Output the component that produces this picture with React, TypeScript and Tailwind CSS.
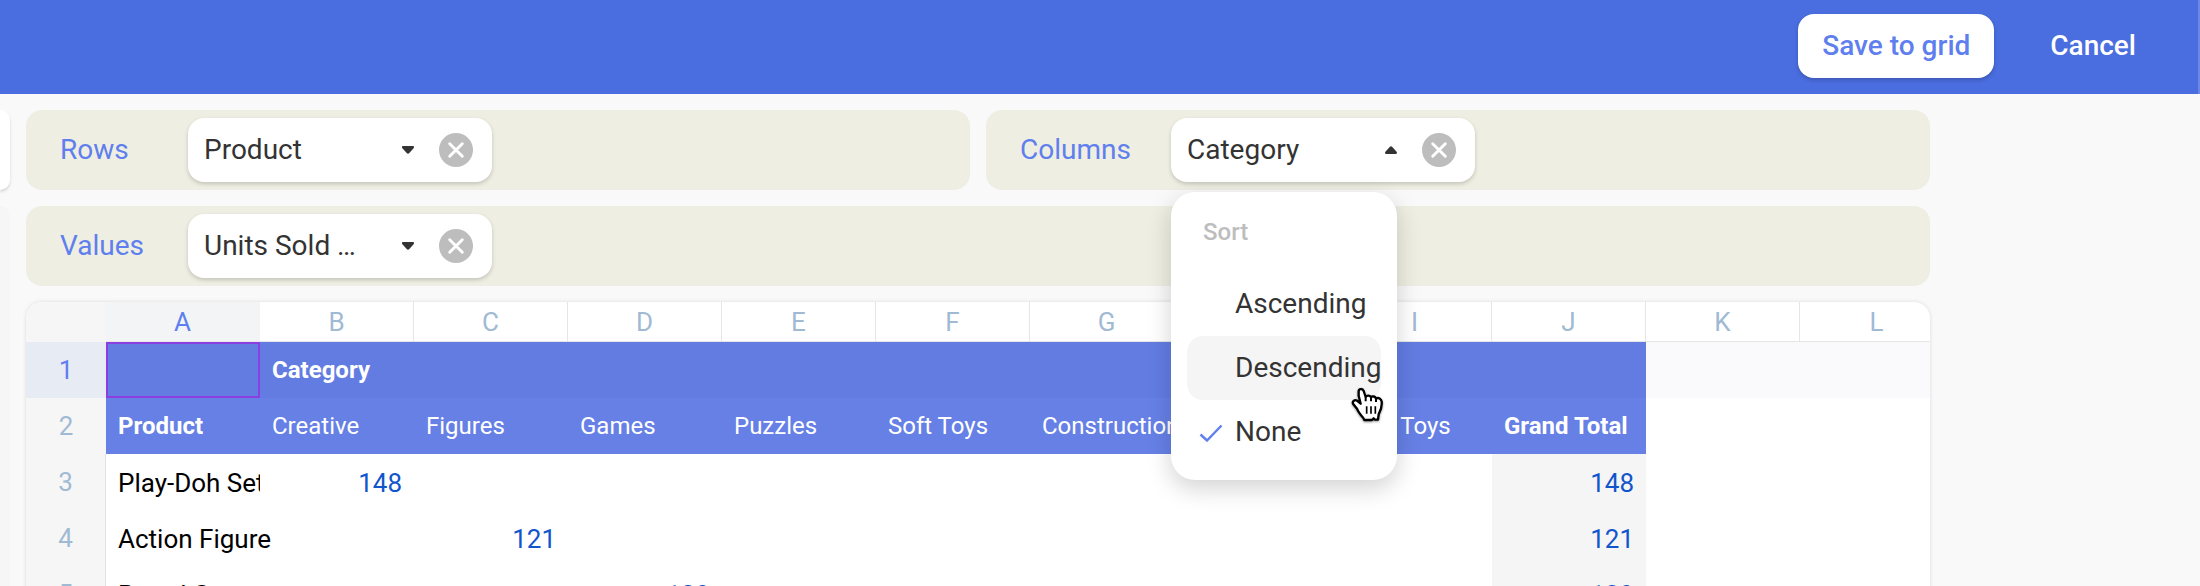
import { useState } from "react";
import { clsx } from "clsx";

type SortOrder = "Ascending" | "Descending" | "None";

type GridRow = {
  product: string;
  column: number;
  value: number;
  clipped?: boolean;
};

const letters = ["A", "B", "C", "D", "E", "F", "G", "H", "I", "J", "K", "L"];

const categories = ["Creative", "Figures", "Games", "Puzzles", "Soft Toys", "Construction", "Outdoor", "Tiny Toys"];

const rows: GridRow[] = [
  { product: "Play-Doh Set", column: 1, value: 148, clipped: true },
  { product: "Action Figure", column: 2, value: 121 },
  { product: "Board Game", column: 3, value: 139 },
];

function Caret({ up }: { up?: boolean }) {
  return (
    <svg width="12" height="8" viewBox="0 0 12 8" className={clsx("shrink-0", up && "rotate-180")}>
      <path d="M1 0h10c1 0 1.300 1.500.6 2.200L7.300 7c-.8.900-1.800.9-2.600 0L.4 2.200C-.3 1.500 0 0 1 0z" fill="#333" />
    </svg>
  );
}

function RemoveIcon() {
  return (
    <svg width="34" height="34" viewBox="0 0 34 34" className="shrink-0">
      <circle cx="17" cy="17" r="17" fill="#bdbdbd" />
      <path d="M10.700 10.700l12.600 12.600M23.300 10.700L10.700 23.300" stroke="#fff" strokeWidth="2.900" strokeLinecap="round" />
    </svg>
  );
}

function Chip({ label, open, onToggle }: { label: string; open?: boolean; onToggle?: () => void }) {
  return (
    <div className="flex h-16 w-[304px] items-center rounded-2xl bg-white pl-4 pr-[19px] shadow-[0_2px_4px_rgba(0,0,0,0.18)]">
      <span className="flex-1 text-[28px] text-[#333]">{label}</span>
      <button className="flex items-center" onClick={onToggle}>
        <Caret up={open} />
      </button>
      <button className="ml-[25px]">
        <RemoveIcon />
      </button>
    </div>
  );
}

function HandCursor() {
  return (
    <svg
      width="32"
      height="36"
      viewBox="33 51 96 108"
      className="pointer-events-none absolute left-[180px] top-[195px] z-20 drop-shadow-[0_1px_1px_rgba(0,0,0,0.4)]"
    >
      <path
        d="M56 64C56 55 68 55 71 63L77 81C80 75 91 76 93 82 97 77 106 79 108 86 115 81 124 86 125 95 127 112 121 124 116 133L114 149H104L101 145 96 150H73L70 144C62 135 55 127 51 116L39 101C36 93 45 88 51 92L62 101 56 77Z"
        fill="#fff"
        stroke="#000"
        strokeWidth="7"
        strokeLinejoin="round"
      />
      <path d="M77 81v13M93 82v12M108 86v10" stroke="#000" strokeWidth="6" />
      <path d="M80 109v22M93 109v22M106 109v22" stroke="#000" strokeWidth="5" />
    </svg>
  );
}

export default function App() {
  const [open, setOpen] = useState(true);
  const [sort, setSort] = useState<SortOrder>("None");

  return (
    <div className="h-[586px] w-[2200px] overflow-hidden bg-[#f9f9f9] font-['Roboto',sans-serif]">
      <header className="flex h-[94px] items-center justify-end border-r-2 border-[#6b87e8] bg-[#4a6de0] pb-0.5 pr-[62px] text-[28px] font-medium">
        <button className="h-16 w-[196px] rounded-2xl bg-white text-[#5f7fee] shadow-[0_2px_4px_rgba(0,0,0,0.2)]">
          Save to grid
        </button>
        <button className="ml-14 text-white">Cancel</button>
      </header>

      <div className="flex">
        <aside className="flex w-[10px] shrink-0 flex-col gap-4 pt-4">
          <div className="h-20 rounded-r-2xl bg-white shadow-[0_2px_3px_rgba(0,0,0,0.15)]" />
          <div className="h-[380px] rounded-tr-2xl bg-[#f6f6f6]" />
        </aside>

        <main className="ml-4 flex w-[1904px] flex-col gap-4 pt-4">
          <div className="flex gap-4">
            <section className="flex h-20 w-[944px] items-center rounded-2xl bg-[#eeeee2] pl-[34px]">
              <span className="w-32 text-[28px] text-[#5f7fee]">Rows</span>
              <Chip label="Product" />
            </section>
            <section className="relative flex h-20 w-[944px] items-center rounded-2xl bg-[#eeeee2] pl-[34px]">
              <span className="w-[151px] text-[28px] text-[#5f7fee]">Columns</span>
              <Chip label="Category" open={open} onToggle={() => setOpen(!open)} />

              {open && (
                <div className="absolute left-[185px] top-[82px] z-10 h-[288px] w-[226px] rounded-3xl bg-white px-4 pt-4 shadow-[0_8px_24px_rgba(0,0,0,0.18)]">
                  <div className="flex h-12 items-center pl-4 text-2xl font-medium text-[#bdbdbd]">Sort</div>
                  <ul className="mt-4">
                    {(["Ascending", "Descending", "None"] as SortOrder[]).map((order) => (
                      <li
                        key={order}
                        onClick={() => setSort(order)}
                        className={clsx(
                          "flex h-16 items-center rounded-2xl text-[28px] text-[#333]",
                          order === "Descending" && "bg-[#f5f5f5]"
                        )}
                      >
                        <span className="flex w-12 shrink-0 justify-center pt-0.5">
                          {sort === order && (
                            <svg width="24" height="18" viewBox="0 0 24 18" fill="none">
                              <path d="M1.500 10.500L8 16.500 22.500 1.500" stroke="#5f7fee" strokeWidth="2.400" />
                            </svg>
                          )}
                        </span>
                        {order}
                      </li>
                    ))}
                  </ul>
                  <HandCursor />
                </div>
              )}
            </section>
          </div>

          <section className="flex h-20 items-center rounded-2xl bg-[#eeeee2] pl-[34px]">
            <span className="w-32 text-[28px] text-[#5f7fee]">Values</span>
            <Chip label="Units Sold …" />
          </section>

          <section className="h-[300px] overflow-hidden rounded-t-2xl bg-white text-2xl shadow-[0_0_4px_rgba(0,0,0,0.12)]">
            <div className="flex h-10 w-[1928px] text-[26px] text-[#a0bad3]">
              <div className="w-20 bg-[#f6f6f6]" />
              {letters.map((letter) => (
                <div
                  key={letter}
                  className={clsx(
                    "flex w-[154px] shrink-0 items-center justify-center border-b border-r border-[#e6e6e6] pt-px",
                    letter === "A" && "border-r-[#f2f4f6] bg-[#f2f4f6] text-[#5f7fee]"
                  )}
                >
                  {letter}
                </div>
              ))}
            </div>

            <div className="flex h-14 bg-[#fafafd]">
              <div className="flex w-20 items-center justify-center bg-[#e7ebf4] text-[26px] text-[#5f7fee]">1</div>
              <div className="w-[154px] border-2 border-[#8b3fe0] bg-[#627ce2]" />
              <div className="flex w-[1386px] items-center bg-[#627ce2] pl-3 font-bold text-white">Category</div>
            </div>

            <div className="flex h-14 items-center text-white">
              <div className="flex h-14 w-20 items-center justify-center bg-[#f6f6f6] text-[26px] text-[#a0bad3]">2</div>
              <div className="flex h-14 w-[1540px] items-center bg-[#6680e6]">
                <div className="w-[154px] pl-3 font-bold">Product</div>
                {categories.map((category) => (
                  <div key={category} className="w-[154px] whitespace-nowrap pl-3">
                    {category}
                  </div>
                ))}
                <div className="w-[154px] whitespace-nowrap pl-3 font-bold">Grand Total</div>
              </div>
            </div>

            {rows.map((row, i) => (
              <div key={row.product} className="flex h-14 text-[26px]">
                <div className="flex w-20 items-center justify-center border-r border-[#e2e2e2] bg-[#f6f6f6] text-[#a0bad3]">
                  {i + 3}
                </div>
                <div
                  className={clsx(
                    "flex w-[154px] items-center whitespace-nowrap pl-3 pt-0.5 text-black",
                    row.clipped && "overflow-hidden"
                  )}
                >
                  {row.product}
                </div>
                {categories.map((category, c) => (
                  <div key={category} className="flex w-[154px] items-center justify-end pr-3 pt-0.5 text-[#1155cc]">
                    {row.column === c + 1 && row.value}
                  </div>
                ))}
                <div className="flex w-[154px] items-center justify-end bg-[#f5f5f5] pr-3 pt-0.5 text-[#1155cc]">
                  {row.value}
                </div>
              </div>
            ))}
          </section>
        </main>
      </div>
    </div>
  );
}
